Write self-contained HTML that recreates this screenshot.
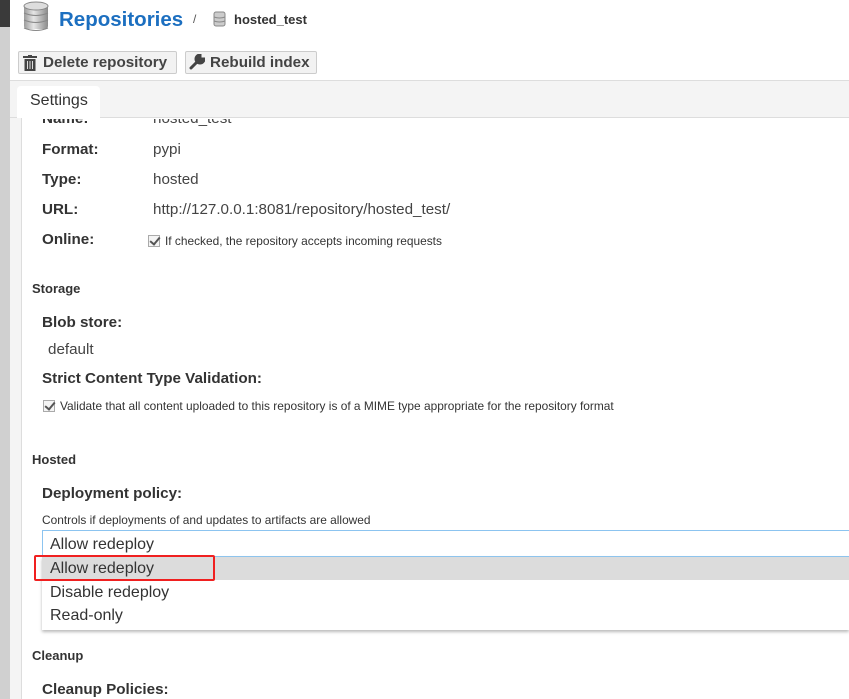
<!DOCTYPE html>
<html><head><meta charset="utf-8"><style>
*{margin:0;padding:0;box-sizing:border-box}
body{width:849px;height:699px;overflow:hidden;background:#fff;font-family:"Liberation Sans",sans-serif;color:#333;position:relative}
.a{position:absolute;white-space:nowrap}
.lbl{font-weight:bold;font-size:15.2px;color:#333}
.val{font-size:15.2px;color:#444}
.sec{font-weight:bold;font-size:13px;color:#333}
.small{font-size:11.9px;color:#333}
.cb{display:inline-block;width:12px;height:12px;border:1px solid #aaa;background:#f4f4f4;vertical-align:-2px;margin-right:5px;position:relative}
.cb:after{content:"";position:absolute;left:3px;top:-1px;width:4px;height:8px;border:solid #555;border-width:0 2px 2px 0;transform:rotate(40deg)}
.btn{position:absolute;top:51px;height:23px;border:1px solid #ccc;background:#f2f2f2;border-radius:2px;font-weight:bold;font-size:15.2px;color:#444;padding:2px 0 0 24px}
</style></head><body>
<div class="a" style="left:0;top:0;width:10px;height:27px;background:#3a3a3a"></div>
<div class="a" style="left:0;top:27px;width:10px;height:672px;background:#d0d0d0"></div>
<div class="a" style="left:10px;top:118px;width:12px;height:581px;background:#f4f4f4;border-right:1px solid #ddd"></div>
<div class="a" style="left:10px;top:80px;width:839px;height:38px;background:#f4f4f4;border-top:1px solid #ddd;border-bottom:1px solid #ddd"></div>
<div class="a" style="left:17px;top:86px;width:83px;height:32px;background:#fff;border-radius:4px 4px 0 0;font-size:16px;color:#333;padding:6px 0 0 13px">Settings</div>

<svg class="a" style="left:22px;top:1px" width="28" height="32" viewBox="0 0 28 32"><defs><linearGradient id="g" x1="0" x2="1"><stop offset="0" stop-color="#9a9a9a"/><stop offset=".4" stop-color="#e6e6e6"/><stop offset="1" stop-color="#8a8a8a"/></linearGradient></defs>
<rect x="2" y="4" width="24" height="24" rx="3" fill="url(#g)"/><ellipse cx="14" cy="5" rx="12" ry="4" fill="#ddd" stroke="#888"/>
<path d="M2 12 Q14 17 26 12 M2 19 Q14 24 26 19" stroke="#888" fill="none"/><path d="M2 27 Q14 32 26 27" stroke="#888" fill="none"/></svg>
<div class="a" style="left:59px;top:8px;font-size:20.5px;font-weight:bold;color:#1c6fc0">Repositories</div>
<div class="a" style="left:193px;top:12px;font-size:12px;color:#555">/</div>
<svg class="a" style="left:213px;top:11px" width="13" height="16" viewBox="0 0 13 16"><rect x="1" y="1" width="11" height="14" rx="2" fill="#ccc" stroke="#888"/><path d="M1 6 Q6.5 8 12 6 M1 10 Q6.5 12 12 10" stroke="#888" fill="none"/></svg>
<div class="a" style="left:234px;top:12px;font-size:13px;font-weight:bold;color:#333">hosted_test</div>

<div class="btn" style="left:18px;width:159px">Delete repository</div>
<svg class="a" style="left:23px;top:55px" width="14" height="16" viewBox="0 0 14 16"><rect x="0" y="1" width="14" height="2" fill="#444"/><rect x="5" y="0" width="4" height="2" fill="#444"/><rect x="1.5" y="4" width="11" height="12" fill="#444"/><path d="M4.5 6v8M7 6v8M9.5 6v8" stroke="#ddd" stroke-width="1"/></svg>
<div class="btn" style="left:185px;width:132px">Rebuild index</div>
<svg class="a" style="left:189px;top:54px" width="16" height="16" viewBox="0 0 16 16"><path d="M2 14 L8 8 M11 1 a4 4 0 1 0 4 4 l-3 0 l-1 -1 z" stroke="#444" stroke-width="3" fill="#444" stroke-linecap="round"/></svg>

<div style="position:absolute;left:23px;top:119px;width:826px;height:580px;overflow:hidden">
<div class="a lbl" style="left:19px;top:-9px">Name:</div><div class="a val" style="left:130px;top:-9px">hosted_test</div>
</div>
<div class="a lbl" style="left:42px;top:141px">Format:</div><div class="a val" style="left:153px;top:141px">pypi</div>
<div class="a lbl" style="left:42px;top:171px">Type:</div><div class="a val" style="left:153px;top:171px">hosted</div>
<div class="a lbl" style="left:42px;top:201px">URL:</div><div class="a val" style="left:153px;top:201px">http://127.0.0.1:8081/repository/hosted_test/</div>
<div class="a lbl" style="left:42px;top:231px">Online:</div><div class="a small" style="left:148px;top:234px"><span class="cb"></span>If checked, the repository accepts incoming requests</div>

<div class="a sec" style="left:32px;top:281px">Storage</div>
<div class="a lbl" style="left:42px;top:314px">Blob store:</div>
<div class="a val" style="left:48px;top:341px">default</div>
<div class="a lbl" style="left:42px;top:370px">Strict Content Type Validation:</div>
<div class="a small" style="left:43px;top:399px"><span class="cb"></span>Validate that all content uploaded to this repository is of a MIME type appropriate for the repository format</div>

<div class="a sec" style="left:32px;top:452px">Hosted</div>
<div class="a lbl" style="left:42px;top:485px">Deployment policy:</div>
<div class="a small" style="left:42px;top:513px">Controls if deployments of and updates to artifacts are allowed</div>
<div class="a" style="left:42px;top:530px;width:807px;height:27px;border:1px solid #8cc4f0;border-right:none;font-size:16px;color:#333;padding:5px 0 0 7px">Allow redeploy</div>
<div class="a" style="left:42px;top:557px;width:807px;height:73px;background:#fff;box-shadow:0 2px 3px #bbb;font-size:16px;color:#333">
<div style="height:23px;background:#dcdcdc;padding:3px 0 0 8px">Allow redeploy</div>
<div style="height:24px;padding:4px 0 0 8px">Disable redeploy</div>
<div style="height:24px;padding:3px 0 0 8px">Read-only</div>
</div>
<div class="a" style="left:34px;top:555px;width:181px;height:26px;border:2px solid #f02020;border-radius:2px"></div>

<div class="a sec" style="left:32px;top:648px">Cleanup</div>
<div class="a lbl" style="left:42px;top:681px">Cleanup Policies:</div>
</body></html>
